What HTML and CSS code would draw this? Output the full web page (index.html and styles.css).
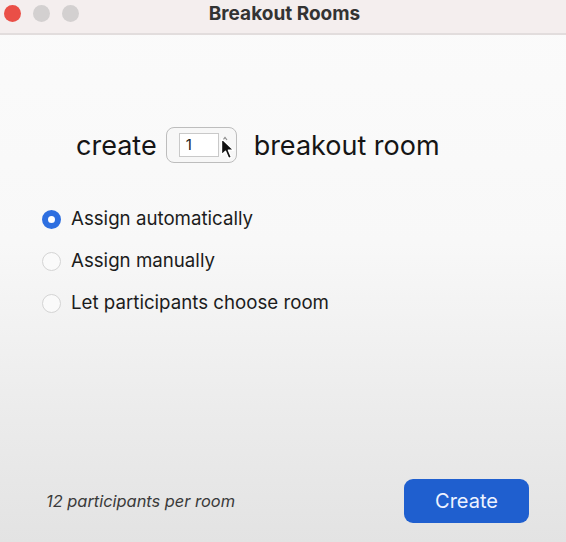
FILE: index.html
```html
<!DOCTYPE html>
<html lang="en">
<head>
<meta charset="utf-8">
<title>Breakout Rooms</title>
<link rel="stylesheet" href="styles.css">
</head>
<body>
<div class="window">
  <header class="titlebar">
    <div class="lights">
      <span class="light close"></span>
      <span class="light"></span>
      <span class="light"></span>
    </div>
    <h1 class="title">Breakout Rooms</h1>
  </header>

  <main class="content">
    <div class="count-row">
      <span class="word">create</span>
      <div class="stepper">
        <span class="stepper-field">1</span>
        <span class="stepper-arrows">
          <svg width="6" height="10" viewBox="0 0 6 10"><path d="M1 4 L3 1.5 L5 4" fill="none" stroke="#8a8a8a" stroke-width="1.2"/></svg>
        </span>
        <svg class="cursor" width="16" height="24" viewBox="0 0 16 24"><path d="M1.5 1.5 L1.5 18 L5.5 14.2 L8.6 21.5 L11.4 20.3 L8.4 13.2 L13.8 13.2 Z" fill="#111" stroke="#fff" stroke-width="1.4" stroke-linejoin="round"/></svg>
      </div>
      <span class="word">breakout room</span>
    </div>

    <ul class="options">
      <li class="option"><span class="radio checked"></span>Assign automatically</li>
      <li class="option"><span class="radio"></span>Assign manually</li>
      <li class="option"><span class="radio"></span>Let participants choose room</li>
    </ul>
  </main>

  <footer class="footer">
    <span class="per-room">12 participants per room</span>
    <button class="create-btn" type="button">Create</button>
  </footer>
</div>
</body>
</html>
```

FILE: styles.css
```css
html, body {
  margin: 0;
  padding: 0;
}

body {
  width: 566px;
  height: 542px;
  overflow: hidden;
  font-family: Inter, "Liberation Sans", Arial, sans-serif;
  color: #1d1d1d;
}

.window {
  width: 566px;
  height: 542px;
  display: flex;
  flex-direction: column;
  background: linear-gradient(to bottom, #fbfbfb 0%, #f8f8f8 45%, #ececec 75%, #e3e3e3 100%);
}

/* title bar */
.titlebar {
  height: 33px;
  flex: none;
  display: flex;
  align-items: center;
  background: #f4eeee;
  border-bottom: 2px solid #e2dddd;
  position: relative;
}

.lights {
  display: flex;
  gap: 12px;
  padding-left: 4px;
  margin-top: -7px;
}

.light {
  width: 17px;
  height: 17px;
  border-radius: 50%;
  background: #d3d0d0;
}

.light.close {
  background: #ea4f47;
}

.title {
  position: absolute;
  left: 0;
  right: 0;
  top: 2px;
  margin: 0;
  text-align: center;
  font-size: 19px;
  font-weight: bold;
  color: #333;
  padding-left: 3px;
}

/* main content */
.content {
  flex: 1;
  display: flex;
  flex-direction: column;
}

.count-row {
  display: flex;
  align-items: center;
  gap: 9px;
  margin: 92px 0 0 76px;
}

.word {
  font-size: 27px;
  color: #151515;
}

.stepper {
  position: relative;
  width: 71px;
  height: 36px;
  box-sizing: border-box;
  border: 1.5px solid #bdbdbd;
  border-radius: 8px;
  background: #f7f7f7;
  display: flex;
  align-items: center;
  padding-left: 12px;
  margin: 0 8px 0 0;
}

.stepper-field {
  width: 40px;
  height: 24px;
  box-sizing: border-box;
  border: 1px solid #c9c9c9;
  background: #fff;
  font-size: 15px;
  line-height: 22px;
  padding-left: 6px;
  color: #222;
}

.stepper-arrows {
  display: flex;
  margin-left: 3px;
  margin-top: -8px;
}

.cursor {
  position: absolute;
  left: 53px;
  top: 9px;
}

.options {
  list-style: none;
  margin: 45px 0 0 42px;
  padding: 0;
  display: flex;
  flex-direction: column;
  gap: 20px;
}

.option {
  display: flex;
  align-items: center;
  gap: 10px;
  font-size: 18.7px;
  line-height: 22px;
  color: #1c1c1c;
}

.radio {
  width: 19px;
  height: 19px;
  box-sizing: border-box;
  border-radius: 50%;
  border: 1px solid #d4d4d4;
  background: #fafafa;
}

.radio.checked {
  border: 6px solid #2e6fe0;
  background: #fff;
}

/* footer */
.footer {
  flex: none;
  display: flex;
  align-items: center;
  justify-content: space-between;
  padding: 0 37px 19px 46px;
}

.per-room {
  font-size: 16.4px;
  font-style: italic;
  color: #3a3a3a;
}

.create-btn {
  width: 125px;
  height: 44px;
  border: none;
  border-radius: 9px;
  background: #1f5fcf;
  color: #eef3ff;
  font-family: inherit;
  font-size: 20px;
  padding: 0;
}
```
